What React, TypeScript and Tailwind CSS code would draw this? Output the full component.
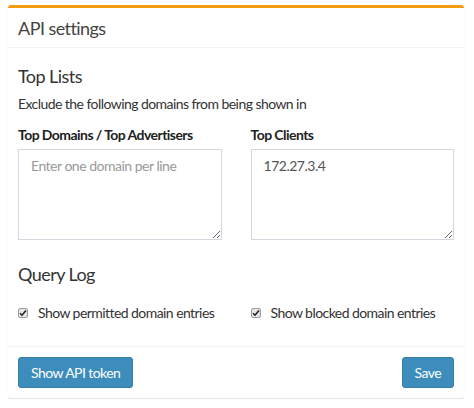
import React from 'react';

const font = { fontFamily: 'Lato, "Noto Sans", sans-serif', letterSpacing: '-0.035em' };

function Check({ label }: { label: string }) {
  return (
    <div className="flex items-center gap-[10px] text-[14px] text-[#333] whitespace-nowrap">
      <span className="w-[10px] h-[10px] border border-[#9a9a9a] bg-[#e6e6e6] rounded-[2px] flex items-center justify-center">
        <svg width="8" height="8" viewBox="0 0 8 8">
          <path d="M1 4.2 L3 6.2 L7 1.6" fill="none" stroke="#222" strokeWidth="1.6" />
        </svg>
      </span>
      <span>{label}</span>
    </div>
  );
}

function Area({ title, value, placeholder }: { title: string; value?: string; placeholder?: string }) {
  return (
    <div className="flex flex-col">
      <label className="text-[14px] font-bold text-[#222] leading-[20px] mb-[4px]">{title}</label>
      <textarea
        readOnly
        defaultValue={value}
        placeholder={placeholder}
        className="h-[91px] w-full border border-[#d2d6de] px-[12px] py-[6px] text-[14px] leading-[20px] text-[#555] placeholder:text-[#999] outline-none"
        style={font}
      />
    </div>
  );
}

export default function App() {
  return (
    <div className="w-[474px] h-[408px] bg-white pt-[5px] pl-[8px]" style={font}>
      <div className="w-[456px] bg-white border-t-[3px] border-[#f39c12] rounded-[3px] shadow-[0_1px_1px_rgba(0,0,0,0.12)]">
        <div className="h-[40px] px-[10px] flex items-center border-b border-[#f4f4f4]">
          <h3 className="text-[18px] text-[#444] leading-none">API settings</h3>
        </div>
        <div className="px-[10px] pt-[18px] pb-[10px]">
          <h4 className="text-[18px] text-[#333] leading-[20px]">Top Lists</h4>
          <p className="mt-[8px] text-[14px] text-[#333] leading-[20px]">Exclude the following domains from being shown in</p>
          <div className="mt-[11px] grid grid-cols-2 gap-[29px]">
            <Area title="Top Domains / Top Advertisers" placeholder="Enter one domain per line" />
            <Area title="Top Clients" value="172.27.3.4" />
          </div>
          <h4 className="mt-[24px] text-[18px] text-[#333] leading-[20px]">Query Log</h4>
          <div className="mt-[18px] grid grid-cols-2 gap-[29px] h-[20px]">
            <Check label="Show permitted domain entries" />
            <Check label="Show blocked domain entries" />
          </div>
          <div className="h-[14px]" />
        </div>
        <div className="border-t border-[#f4f4f4] p-[10px] flex justify-between">
          <button className="h-[31px] px-[12px] bg-[#3c8dbc] border border-[#367fa9] rounded-[3px] text-white text-[14px]">
            Show API token
          </button>
          <button className="h-[31px] px-[12px] bg-[#3c8dbc] border border-[#367fa9] rounded-[3px] text-white text-[14px]">
            Save
          </button>
        </div>
      </div>
    </div>
  );
}
